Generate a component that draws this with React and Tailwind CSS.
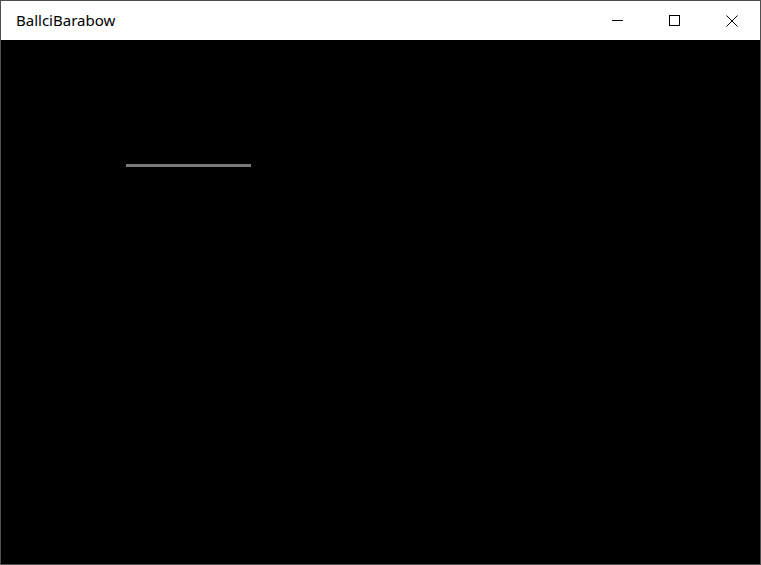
import React from 'react';

const TitleButton = ({ children }) => (
  <div className="w-[57px] h-full flex items-center justify-center">{children}</div>
);

const App = () => {
  return (
    <div className="w-[761px] h-[565px] flex flex-col border border-[#505050] bg-black overflow-hidden">
      {/* title bar */}
      <div className="h-[39px] bg-white flex items-center shrink-0">
        <span
          className="pl-[15px] text-[15px] text-black flex-1"
          style={{ fontFamily: '"Noto Sans", "Open Sans", sans-serif' }}
        >
          BallciBarabow
        </span>
        <TitleButton>
          <svg width="11" height="11" viewBox="0 0 11 11">
            <path d="M0 5.5H11" stroke="#000" strokeWidth="1" />
          </svg>
        </TitleButton>
        <TitleButton>
          <svg width="11" height="11" viewBox="0 0 11 11">
            <rect x="0.5" y="0.5" width="10" height="10" fill="none" stroke="#000" strokeWidth="1" />
          </svg>
        </TitleButton>
        <TitleButton>
          <svg width="12" height="12" viewBox="0 0 12 12">
            <path d="M0.5 0.5L11.5 11.5M11.5 0.5L0.5 11.5" stroke="#000" strokeWidth="1" />
          </svg>
        </TitleButton>
      </div>

      {/* canvas */}
      <div className="flex-1 bg-black pl-[125px] pt-[124px]">
        <div className="w-[125px] h-[3px] bg-[#7a7a7a]" />
      </div>
    </div>
  );
};

export default App;
